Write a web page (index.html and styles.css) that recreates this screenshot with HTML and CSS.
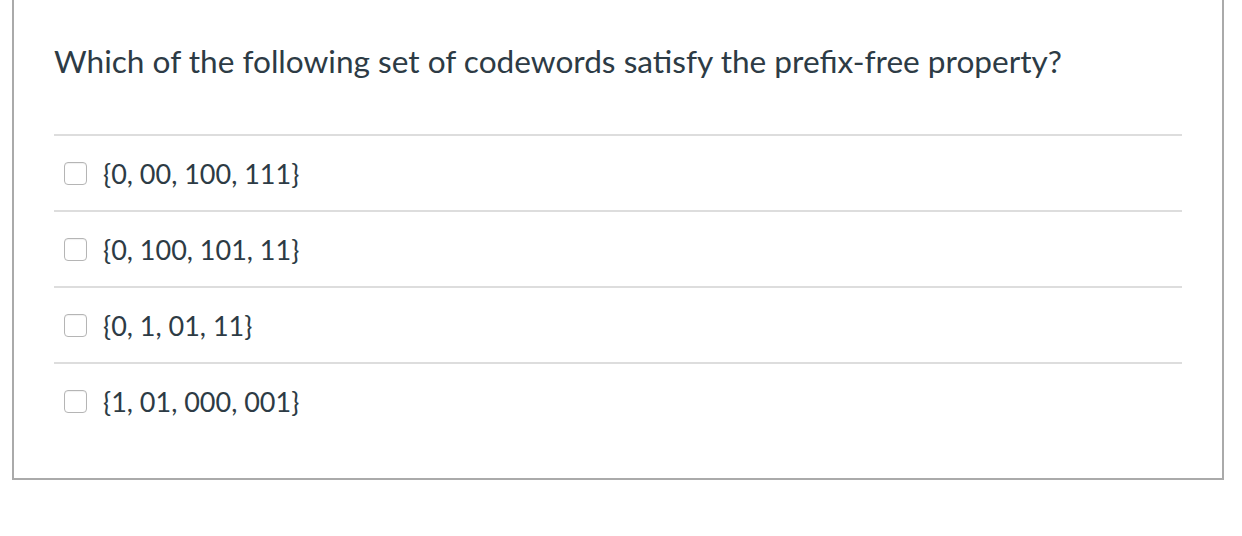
FILE: index.html
```html
<!DOCTYPE html>
<html lang="en">
<head>
    <meta charset="UTF-8">
    <title>Quiz Question</title>
    <link rel="stylesheet" href="styles.css">
</head>
<body>
    <div class="question-box">
        <div class="question-text">Which of the following set of codewords satisfy the prefix-free property?</div>
        <div class="answers">
            <label class="answer"><input type="checkbox"><span>{0, 00, 100, 111}</span></label>
            <label class="answer"><input type="checkbox"><span>{0, 100, 101, 11}</span></label>
            <label class="answer"><input type="checkbox"><span>{0, 1, 01, 11}</span></label>
            <label class="answer"><input type="checkbox"><span>{1, 01, 000, 001}</span></label>
        </div>
    </div>
</body>
</html>
```

FILE: styles.css
```css
body {
    margin: 0;
    font-family: Lato, "Open Sans", sans-serif;
    background-color: #ffffff;
    color: #2d3b45;
}
.question-box {
    box-sizing: border-box;
    margin-left: 12px;
    width: 1212px;
    border: 2px solid #aaaaaa;
    border-top: none;
    padding: 42px 40px 40px 40px;
}
.question-text {
    font-size: 31.6px;
    line-height: 38px;
    margin-bottom: 54px;
}
.answer {
    display: flex;
    align-items: center;
    height: 74px;
    border-top: 2px solid #dddddd;
    font-size: 27px;
}
.answer input {
    appearance: none;
    flex: none;
    width: 23px;
    height: 23px;
    margin: 0 16px 0 10px;
    border: 1px solid #b5b5b5;
    border-radius: 4px;
    background-color: #ffffff;
    box-shadow: inset 0 1px 1px rgba(0, 0, 0, 0.06);
}
```
